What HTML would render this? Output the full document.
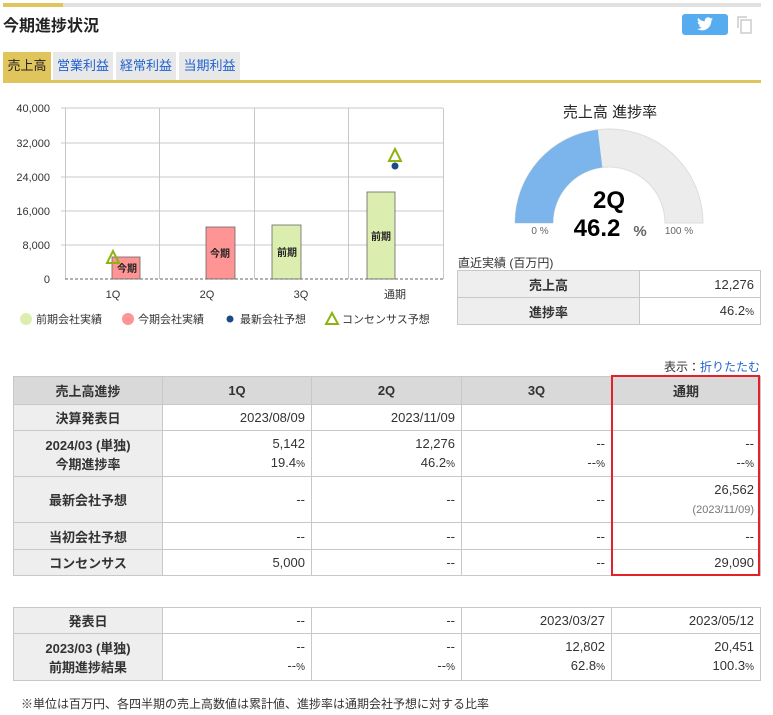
<!DOCTYPE html>
<html><head><meta charset="utf-8"><style>
*{margin:0;padding:0;box-sizing:border-box}
body{width:773px;height:715px;background:#fff;font-family:"Liberation Sans","Noto Sans CJK JP",sans-serif;color:#333;position:relative;overflow:hidden;font-size:13px}
.a{position:absolute}
table{border-collapse:collapse;position:absolute;table-layout:fixed}
td,th{border:1px solid #c8c8c8;padding:0 6px;font-size:13px}
th{background:#eee;font-weight:bold;text-align:center}
thead th{background:#d9d9d9}
td{text-align:right;line-height:19px}
.p{font-size:10px}
.s{font-size:11px;color:#777}
</style></head><body>
<div class="a" style="left:3px;top:3px;width:758px;height:4px;background:#e1e1e1"></div>
<div class="a" style="left:3px;top:3px;width:60px;height:4px;background:#e0c45c"></div>
<div class="a" style="left:3px;top:12px;font-size:16px;font-weight:bold;color:#222">今期進捗状況</div>
<div class="a" style="left:682px;top:14px;width:46px;height:21px;background:#55acee;border-radius:3px"></div>
<svg class="a" style="left:697px;top:17px" width="16" height="14" viewBox="0 0 24 20"><path fill="#fff" d="M24 2.4a10 10 0 0 1-2.8.8A5 5 0 0 0 23.3.4a10 10 0 0 1-3.1 1.2A4.9 4.9 0 0 0 11.8 6 14 14 0 0 1 1.7.9a4.9 4.9 0 0 0 1.5 6.6A4.9 4.9 0 0 1 1 6.9a4.9 4.9 0 0 0 3.9 4.8 5 5 0 0 1-2.2.1 4.9 4.9 0 0 0 4.6 3.4A9.9 9.9 0 0 1 0 17.3 14 14 0 0 0 7.5 19.5c9.1 0 14-7.5 14-14v-.6A10 10 0 0 0 24 2.4z"/></svg>
<svg class="a" style="left:736px;top:15px" width="18" height="20"><path d="M2 13V2h9" fill="none" stroke="#ccc" stroke-width="1.5"/><rect x="5" y="5" width="10" height="13" fill="none" stroke="#ccc" stroke-width="1.5"/></svg>
<div class="a" style="left:3px;top:52px;width:48px;height:28px;background:#e0c45c;font-size:13px;line-height:28px;text-align:center;color:#222">売上高</div>
<div class="a" style="left:53px;top:52px;width:60px;height:28px;background:#e8e8e8;font-size:13px;line-height:28px;text-align:center;color:#1f63d0">営業利益</div>
<div class="a" style="left:116px;top:52px;width:60px;height:28px;background:#e8e8e8;font-size:13px;line-height:28px;text-align:center;color:#1f63d0">経常利益</div>
<div class="a" style="left:179px;top:52px;width:61px;height:28px;background:#e8e8e8;font-size:13px;line-height:28px;text-align:center;color:#1f63d0">当期利益</div>
<div class="a" style="left:3px;top:80px;width:758px;height:3px;background:#e0c45c"></div>

<svg class="a" style="left:0;top:95px" width="450" height="245" font-family="Liberation Sans,Noto Sans CJK JP,sans-serif">
<g stroke="#c8c8c8" fill="none">
<path d="M61 13H443M61 48H443M61 82H443M61 116H443M61 150H443"/>
<path d="M65.5 13V184M159.5 13V184M254.5 13V184M348.5 13V184M443.5 13V184"/>
</g>
<g font-size="11" fill="#333" text-anchor="end">
<text x="50" y="17">40,000</text><text x="50" y="52">32,000</text><text x="50" y="86">24,000</text><text x="50" y="120">16,000</text><text x="50" y="154">8,000</text><text x="50" y="188">0</text>
</g>
<g stroke="#666" stroke-width="0.8">
<rect x="112" y="162" width="28" height="22" fill="#ff9494"/>
<rect x="206" y="132" width="29" height="52" fill="#ff9494"/>
<rect x="272" y="130" width="29" height="54" fill="#dcedb0"/>
<rect x="367" y="97" width="28" height="87" fill="#dcedb0"/>
</g>
<path d="M65 184H443" stroke="#666" stroke-dasharray="3,2"/>
<g font-size="10" font-weight="bold" fill="#222" text-anchor="middle">
<text x="127" y="177">今期</text><text x="220" y="162">今期</text><text x="287" y="161">前期</text><text x="381" y="145">前期</text>
</g>
<path d="M113 156L107 168H119Z" fill="none" stroke="#8cb30e" stroke-width="2"/>
<path d="M395 54L389 66H401Z" fill="none" stroke="#8cb30e" stroke-width="2"/>
<circle cx="395" cy="71" r="3.5" fill="#1c4a85"/>
<g font-size="11" fill="#333" text-anchor="middle">
<text x="113" y="203">1Q</text><text x="207" y="203">2Q</text><text x="301" y="203">3Q</text><text x="395" y="203">通期</text>
</g>
<g font-size="11" fill="#333">
<circle cx="26" cy="224" r="6" fill="#dcedb0"/><text x="36" y="228">前期会社実績</text>
<circle cx="128" cy="224" r="6" fill="#ff9494"/><text x="138" y="228">今期会社実績</text>
<circle cx="230" cy="224" r="3.5" fill="#1c4a85"/><text x="240" y="228">最新会社予想</text>
<path d="M332 218L326 229H338Z" fill="none" stroke="#8cb30e" stroke-width="2"/><text x="342" y="228">コンセンサス予想</text>
</g>
</svg>

<svg class="a" style="left:450px;top:95px" width="323" height="150" font-family="Liberation Sans,Noto Sans CJK JP,sans-serif">
<text x="160" y="22" font-size="15" text-anchor="middle" fill="#222">売上高 進捗率</text>
<path d="M65 128A94 94 0 0 1 253 128H215A56 56 0 0 0 103 128Z" fill="#ececec" stroke="#ddd"/>
<path d="M65 128A94 94 0 0 1 147.8 34.7L152.3 72.4A56 56 0 0 0 103 128Z" fill="#7cb5ec"/>
<text x="159" y="113" font-size="24" font-weight="bold" text-anchor="middle" fill="#000">2Q</text>
<text x="147" y="141" font-size="24" font-weight="bold" text-anchor="middle" fill="#000">46.2</text>
<text x="190" y="141" font-size="15" font-weight="bold" text-anchor="middle" fill="#666">%</text>
<text x="90" y="139" font-size="10" text-anchor="middle" fill="#666">0 %</text>
<text x="229" y="139" font-size="10" text-anchor="middle" fill="#666">100 %</text>
</svg>
<div class="a" style="left:458px;top:254px;font-size:12px;color:#333">直近実績 (百万円)</div>
<table style="left:457px;top:270px;width:304px">
<tr style="height:27px"><th style="width:182px">売上高</th><td>12,276</td></tr>
<tr style="height:27px"><th>進捗率</th><td>46.2<span class="p">%</span></td></tr>
</table>

<div class="a" style="right:13px;top:358px;font-size:12px">表示：<span style="color:#1f63d0">折りたたむ</span></div>
<table style="left:13px;top:376px;width:748px">
<thead><tr style="height:28px"><th style="width:149px">売上高進捗</th><th style="width:149px">1Q</th><th style="width:150px">2Q</th><th style="width:150px">3Q</th><th>通期</th></tr></thead>
<tr style="height:26px"><th>決算発表日</th><td>2023/08/09</td><td>2023/11/09</td><td></td><td></td></tr>
<tr style="height:46px"><th>2024/03 (単独)<br>今期進捗率</th><td>5,142<br>19.4<span class="p">%</span></td><td>12,276<br>46.2<span class="p">%</span></td><td>--<br>--<span class="p">%</span></td><td>--<br>--<span class="p">%</span></td></tr>
<tr style="height:46px"><th>最新会社予想</th><td>--</td><td>--</td><td>--</td><td>26,562<br><span class="s">(2023/11/09)</span></td></tr>
<tr style="height:27px"><th>当初会社予想</th><td>--</td><td>--</td><td>--</td><td>--</td></tr>
<tr style="height:26px"><th>コンセンサス</th><td>5,000</td><td>--</td><td>--</td><td>29,090</td></tr>
</table>
<div class="a" style="left:611px;top:375px;width:149px;height:201px;border:2px solid #e5202a"></div>

<table style="left:13px;top:607px;width:748px">
<tr style="height:26px"><th style="width:149px">発表日</th><td style="width:149px">--</td><td style="width:150px">--</td><td style="width:150px">2023/03/27</td><td>2023/05/12</td></tr>
<tr style="height:47px"><th>2023/03 (単独)<br>前期進捗結果</th><td>--<br>--<span class="p">%</span></td><td>--<br>--<span class="p">%</span></td><td>12,802<br>62.8<span class="p">%</span></td><td>20,451<br>100.3<span class="p">%</span></td></tr>
</table>
<div class="a" style="left:21px;top:695px;font-size:12px;color:#333">※単位は百万円、各四半期の売上高数値は累計値、進捗率は通期会社予想に対する比率</div>
</body></html>
